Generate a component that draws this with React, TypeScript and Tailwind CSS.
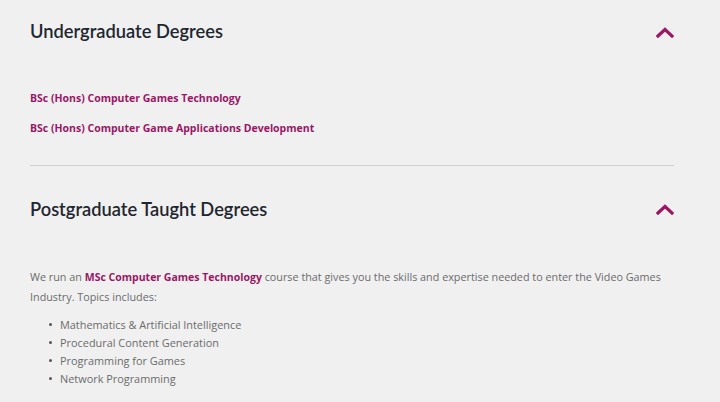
const magenta = "text-[#9b1766]";

function Chevron() {
  return (
    <svg width="18" height="11" viewBox="0 0 18 11" className="shrink-0">
      <path d="M2 9 L9 2.5 L16 9" fill="none" stroke="#9b1766" strokeWidth="3.2" strokeLinecap="square" />
    </svg>
  );
}

const topics = [
  "Mathematics & Artificial Intelligence",
  "Procedural Content Generation",
  "Programming for Games",
  "Network Programming",
];

export default function App() {
  return (
    <div className="h-[402px] w-[720px] overflow-hidden bg-[#f0f0f0] font-['Open_Sans',sans-serif]">
      <div className="ml-[30px] w-[644px]">
        {/* undergraduate */}
        <div className="flex h-[63px] items-center justify-between pt-px">
          <h2 className="font-['Lato',sans-serif] text-[18.3px] font-semibold text-[#1f2630]">
            Undergraduate Degrees
          </h2>
          <Chevron />
        </div>
        <div className="flex flex-col gap-[14px] pt-[28px] pb-[28px] text-[10.5px] font-bold">
          <a className={magenta}>BSc (Hons) Computer Games Technology</a>
          <a className={magenta}>BSc (Hons) Computer Game Applications Development</a>
        </div>
        <div className="h-px bg-[#cfcfcf]" />

        {/* postgraduate */}
        <div className="flex h-[87px] items-center justify-between pt-px">
          <h2 className="font-['Lato',sans-serif] text-[18.3px] font-semibold text-[#1f2630]">
            Postgraduate Taught Degrees
          </h2>
          <Chevron />
        </div>
        <p className="mt-[14px] text-[10.8px] leading-[19px] text-[#6b6b6b]">
          We run an <a className={`text-[10.5px] font-bold ${magenta}`}>MSc Computer Games Technology</a> course that
          gives you the skills and expertise needed to enter the Video Games Industry. Topics includes:
        </p>
        <ul className="mt-[10px] pl-[19px] text-[10.9px] leading-[18px] text-[#6b6b6b]">
          {topics.map((t) => (
            <li key={t} className="flex items-center gap-[8px]">
              <span className="h-[3px] w-[3px] rounded-full bg-[#555]" />
              {t}
            </li>
          ))}
        </ul>
      </div>
    </div>
  );
}
